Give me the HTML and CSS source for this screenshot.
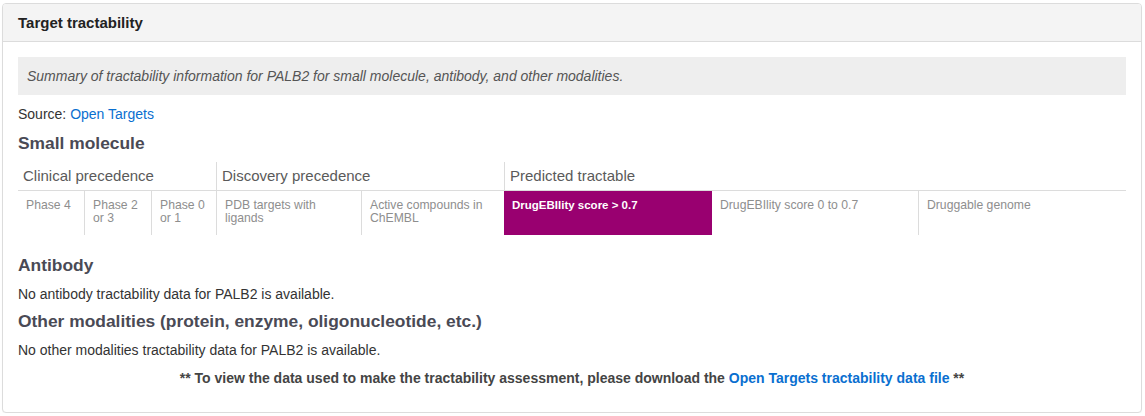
FILE: index.html
```html
<!DOCTYPE html>
<html>
<head>
<meta charset="utf-8">
<link rel="stylesheet" href="styles.css">
</head>
<body>
<div class="panel">
  <div class="panel-heading">Target tractability</div>
  <div class="panel-body">
    <div class="summary">Summary of tractability information for PALB2 for small molecule, antibody, and other modalities.</div>
    <p class="source">Source: <a href="#">Open Targets</a></p>
    <h3 class="section-title">Small molecule</h3>
    <div class="tract-grid">
      <div class="group g-clinical">Clinical precedence</div>
      <div class="group g-discovery sep">Discovery precedence</div>
      <div class="group g-predicted sep">Predicted tractable</div>
      <div class="cell">Phase 4</div>
      <div class="cell sep">Phase 2 or 3</div>
      <div class="cell sep">Phase 0 or 1</div>
      <div class="cell sep">PDB targets with ligands</div>
      <div class="cell sep">Active compounds in ChEMBL</div>
      <div class="cell active">DrugEBIlity score &gt; 0.7</div>
      <div class="cell">DrugEBIlity score 0 to 0.7</div>
      <div class="cell sep">Druggable genome</div>
    </div>
    <h3 class="section-title antibody">Antibody</h3>
    <p class="note">No antibody tractability data for PALB2 is available.</p>
    <h3 class="section-title other">Other modalities (protein, enzyme, oligonucleotide, etc.)</h3>
    <p class="note">No other modalities tractability data for PALB2 is available.</p>
    <p class="footer">** To view the data used to make the tractability assessment, please download the <a href="#">Open Targets tractability data file</a> **</p>
  </div>
</div>
</body>
</html>
```

FILE: styles.css
```css
html, body {
  margin: 0;
  padding: 0;
  background: #fff;
}

body {
  font-family: "Liberation Sans", Arial, Helvetica, sans-serif;
  font-size: 14px;
  line-height: 18px;
  color: #333;
}

a {
  color: #0a6fd0;
  text-decoration: none;
}

.panel {
  margin: 3px 3px 0 2px;
  border: 1px solid #dcdcdc;
  border-radius: 4px;
  background: #fff;
  box-shadow: 0 1px 1px rgba(0, 0, 0, 0.04);
}

.panel-heading {
  background: #f4f4f4;
  border-bottom: 1px solid #dcdcdc;
  border-radius: 3px 3px 0 0;
  padding: 10px 15px;
  font-size: 15px;
  line-height: 17px;
  font-weight: bold;
  color: #222;
}

.panel-body {
  padding: 15px 15px 25px;
}

.summary {
  background: #eeeeee;
  padding: 10px 9px;
  font-style: italic;
  color: #555;
}

.source {
  margin: 10px 0 0;
}

.section-title {
  margin: 10px 0 9px;
  font-size: 17.4px;
  line-height: 20px;
  font-weight: bold;
  color: #4a4a55;
}

.section-title.antibody {
  margin-top: 20px;
  margin-bottom: 10px;
}

.section-title.other {
  margin-top: 8px;
  margin-bottom: 10px;
}

.note {
  margin: 0;
}

.tract-grid {
  display: grid;
  grid-template-columns: 66px 67px 65px 145px 143px 208px 206px 208px;
}

.group {
  padding: 3px 5px 4px;
  font-size: 15px;
  line-height: 21px;
  color: #5a5a5a;
  border-bottom: 1px solid #dcdcdc;
}

.g-clinical { grid-column: span 3; }
.g-discovery { grid-column: span 2; }
.g-predicted { grid-column: span 3; }

.sep {
  border-left: 1px solid #dcdcdc;
}

.cell {
  height: 44px;
  box-sizing: border-box;
  padding: 8px 8px 0;
  font-size: 12.2px;
  line-height: 13px;
  color: #8e8e8e;
}

.cell.active {
  background: #990070;
  color: #fff;
  font-size: 11.5px;
  font-weight: bold;
}

.footer {
  margin: 10px 0 0;
  text-align: center;
  font-weight: bold;
  color: #444;
}
```
